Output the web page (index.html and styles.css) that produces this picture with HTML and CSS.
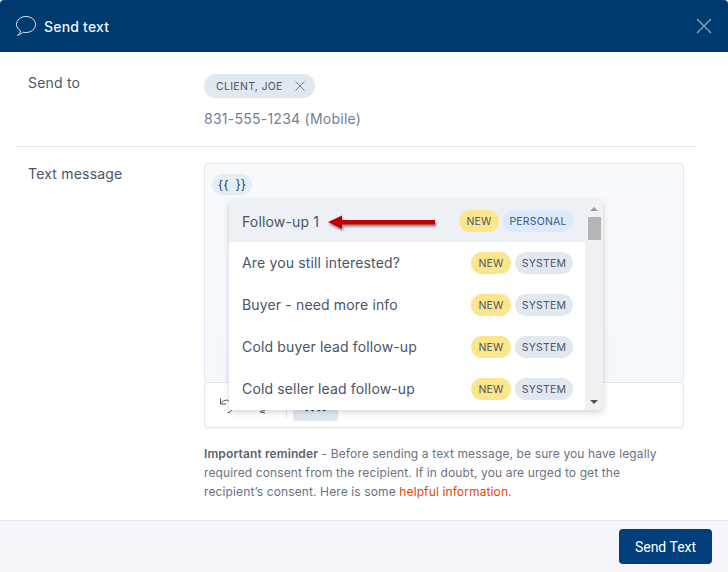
FILE: index.html
```html
<!DOCTYPE html>
<html lang="en">
<head>
<meta charset="utf-8">
<title>Send text</title>
<link rel="stylesheet" href="styles.css">
</head>
<body>
<div class="modal">
  <header class="header">
    <svg class="chat-icon" width="20" height="20" viewBox="0 0 20 20" fill="none" stroke="currentColor" stroke-width="1">
      <path d="M4.500 14.800C2 13.300.500 11 .500 8.500.500 4 4.700.500 10 .500s9.500 3.500 9.500 8-4.200 8-9.500 8c-1 0-2-.1-2.900-.3C6 17.500 4 18.700 1.500 19.300 3 18.200 4.300 16.700 4.500 14.800Z"/>
    </svg>
    <h1 class="title">Send text</h1>
    <svg class="close-icon" width="16" height="16" viewBox="0 0 16 16" stroke="currentColor" stroke-width="1.200"><path d="M1 1l14 14M15 1L1 15"/></svg>
  </header>
  <main class="content">
    <section class="row row-to">
      <div class="label">Send to</div>
      <div class="value">
        <span class="chip">CLIENT, JOE
          <svg class="chip-x" width="10" height="10" viewBox="0 0 10 10" stroke="currentColor" stroke-width="1"><path d="M.5.500l9 9M9.500.500l-9 9"/></svg>
        </span>
        <div class="phone">831-555-1234 (Mobile)</div>
      </div>
    </section>
    <section class="row row-msg">
      <div class="label">Text message</div>
      <div class="value">
        <div class="composer">
          <div class="editor"><span class="token">{{&nbsp; }}</span></div>
          <div class="toolbar">
            <svg class="tool tool-undo" width="14" height="17" viewBox="0 0 14 17" fill="none" stroke="currentColor" stroke-width="1"><path d="M1.500 1.500V7H7M1.500 7C4 3 8 2 11 4.500c3 3 3 8 0 10.500-.8.600-1.500.500-2.500.500"/></svg>
            <svg class="tool tool-redo" width="14" height="17" viewBox="0 0 14 17" fill="none" stroke="currentColor" stroke-width="1"><path d="M12.500 1.500V7H7M12.500 7C10 3 6 2 3 4.500M8 14.800l5-1.500M8 14.800l5 1.200"/></svg>
            <span class="tool-sep"></span>
            <span class="tool-pill">{{ }}</span>
          </div>
          <div class="menu">
            <ul class="menu-list">
              <li class="item active"><span class="item-name">Follow-up 1</span><span class="badge new">NEW</span><span class="badge personal">PERSONAL</span></li>
              <li class="item"><span class="item-name">Are you still interested?</span><span class="badge new">NEW</span><span class="badge system">SYSTEM</span></li>
              <li class="item"><span class="item-name">Buyer - need more info</span><span class="badge new">NEW</span><span class="badge system">SYSTEM</span></li>
              <li class="item"><span class="item-name">Cold buyer lead follow-up</span><span class="badge new">NEW</span><span class="badge system">SYSTEM</span></li>
              <li class="item"><span class="item-name">Cold seller lead follow-up</span><span class="badge new">NEW</span><span class="badge system">SYSTEM</span></li>
            </ul>
            <div class="scrollbar">
              <span class="arrow-up"></span>
              <span class="thumb"></span>
              <span class="arrow-down"></span>
            </div>
          </div>
          <svg class="callout" width="116" height="30" viewBox="0 0 116 30">
            <defs><filter id="arrow-shadow" x="-10%" y="-50%" width="120%" height="220%"><feDropShadow dx="1" dy="2" stdDeviation="1.300" flood-color="#000" flood-opacity=".45"/></filter></defs>
            <path d="M4 13 18 6.500V11H111V15.500H18V20Z" fill="#c00000" filter="url(#arrow-shadow)"/>
          </svg>
        </div>
        <p class="note"><strong>Important reminder</strong> - Before sending a text message, be sure you have legally<br>required consent from the recipient. If in doubt, you are urged to get the<br>recipient’s consent. Here is some <a class="link" href="#">helpful information</a>.</p>
      </div>
    </section>
  </main>
  <footer class="footer"><button class="send" type="button">Send Text</button></footer>
</div>
</body>
</html>
```
FILE: styles.css
```css
* { box-sizing: border-box; }
html, body { margin: 0; padding: 0; background: #fff; }
body { width: 728px; height: 572px; overflow: hidden; font-family: Inter, "Liberation Sans", sans-serif; color: #4a5568; }
.modal { width: 728px; height: 572px; display: flex; flex-direction: column; background: #fff; }
.header { height: 52px; flex: none; display: flex; align-items: center; padding: 0 16px; background: #003a6f; color: #fff; border-radius: 4px 4px 0 0; }
.chat-icon { color: #dbe6f0; margin-right: 8px; margin-top: -1px; }
.title { flex: 1; margin: 0; font-size: 14px; font-weight: 500; letter-spacing: .2px; color: #eef3f8; }
.close-icon { color: #8fa9c2; }
.content { flex: 1; min-height: 0; margin: 0 32px 0 16px; }
.row { display: grid; grid-template-columns: 176px 1fr; padding-left: 12px; }
.row-to { height: 95px; padding-top: 21px; border-bottom: 1px solid #e2e8f0; }
.row-msg { padding-top: 16px; }
.label { font-size: 14px; line-height: 20px; letter-spacing: .2px; color: #4a5568; }
.row-msg .label { margin-top: 1px; }
.chip { display: inline-flex; align-items: center; height: 24px; width: 111px; margin-top: 1px; padding-left: 12px; border-radius: 12px; background: #e2e8f0; font-size: 10.500px; letter-spacing: .3px; color: #4a5568; white-space: nowrap; }
.chip-x { margin-left: 12px; color: #718096; }
.row-to .value { display: flex; flex-direction: column; align-items: flex-start; }
.phone { margin-top: 11px; font-size: 14px; line-height: 20px; letter-spacing: .25px; color: #718096; }
.composer { position: relative; width: 480px; }
.editor { height: 219px; padding: 9px 7px; border: 1px solid #e2e8f0; border-bottom: 0; border-radius: 4px 4px 0 0; background: linear-gradient(#f8fafc, #f5f8fd); }
.token { display: inline-flex; align-items: center; justify-content: center; width: 40px; height: 21px; border-radius: 11px; background: #e5edf5; font-size: 12.500px; color: #2d4a6b; }
.toolbar { height: 46px; display: flex; align-items: center; padding-left: 14px; border: 1px solid #e2e8f0; border-radius: 4px; background: #fff; box-shadow: 0 1px 2px rgba(0,0,0,.05); }
.tool { color: #4a5568; flex: none; }
.tool-redo { margin-left: 19px; }
.tool-sep { width: 1px; height: 26px; margin: 2px 0 0 20px; background: #e2e8f0; }
.tool-pill { width: 45px; height: 28px; margin: 4px 0 0 6px; border-radius: 3px; background: #e2e8f0; font-size: 12px; font-weight: 700; text-align: center; line-height: 25px; color: #2d3748; }
.menu { position: absolute; left: 25px; top: 37px; width: 374px; height: 210px; display: flex; background: #f1f1f3; border-radius: 4px; box-shadow: 0 2px 6px rgba(45,55,72,.22); overflow: hidden; }
.menu-list { flex: none; width: 356px; margin: 0; padding: 0; list-style: none; background: #fff; }
.item { height: 42px; display: flex; align-items: center; padding: 0 12px 0 13px; gap: 4px; font-size: 14px; letter-spacing: .15px; color: #4a5568; }
.item.active { background: #edf0f5; }
.item-name { flex: 1; white-space: nowrap; padding-bottom: 2px; }
.active .item-name { padding-bottom: 0; }
.badge { height: 22px; display: inline-flex; align-items: center; justify-content: center; border-radius: 11px; font-size: 10.500px; color: #4a5568; letter-spacing: .2px; }
.new { width: 40px; background: #fde58c; }
.system { width: 58px; background: #e2e8f0; }
.personal { width: 70px; background: #dbeafe; }
.scrollbar { position: relative; flex: 1; display: flex; flex-direction: column; align-items: center; padding: 7px 0 6px; }
.thumb { width: 13px; height: 23px; margin-top: 6px; background: #b5b5b5; }
.arrow-up, .arrow-down { width: 0; height: 0; border-left: 4px solid transparent; border-right: 4px solid transparent; }
.arrow-up { border-bottom: 4px solid #9a9aa0; }
.arrow-down { margin-top: auto; border-top: 4px solid #505058; }
.callout { position: absolute; left: 120px; top: 46px; }
.note { margin: 16px 0 0; font-size: 12px; line-height: 19px; letter-spacing: .12px; color: #6b7280; }
.note strong { font-weight: 600; color: #5a6472; }
.link { color: #dd4b0a; text-decoration: none; }
.footer { height: 52px; flex: none; display: flex; align-items: center; justify-content: flex-end; padding: 0 16px; background: #f4f6fb; border-top: 1px solid #e2e8f0; }
.send { width: 93px; height: 35px; border: 0; border-radius: 4px; background: #003f7c; color: #fff; font-family: Roboto, "Liberation Sans", sans-serif; font-size: 14px; font-weight: 400; }
```
